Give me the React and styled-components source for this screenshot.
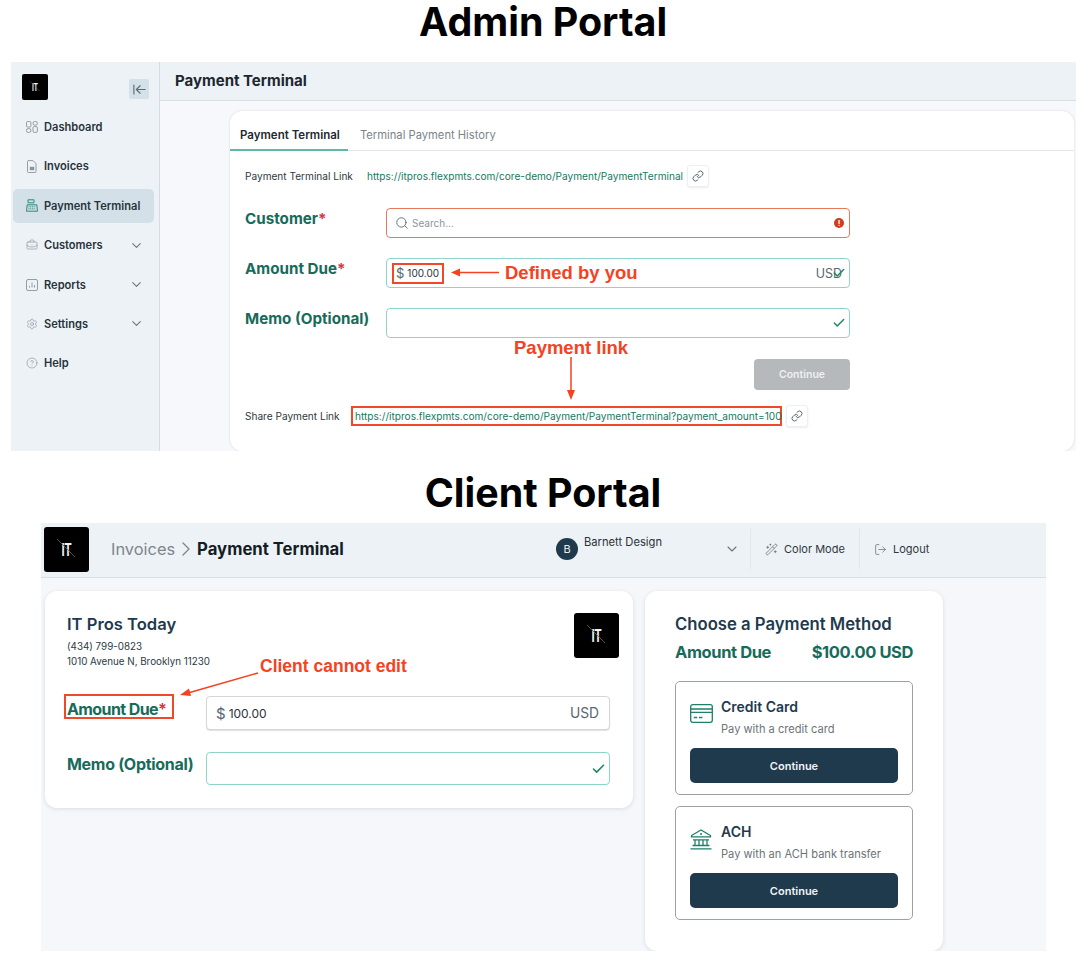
import * as React from 'react';
import styled, { createGlobalStyle } from 'styled-components';
import {
  ArrowLeftToLine,
  BriefcaseBusiness,
  Check,
  ChevronDown,
  ChevronRight,
  CircleHelp,
  Link as LinkIcon,
  LogOut,
  Search,
  Settings,
  WandSparkles,
} from 'lucide-react';

const GlobalStyle = createGlobalStyle`
  html, body {
    margin: 0;
    background: #fff;
    font-family: Inter, "Liberation Sans", sans-serif;
  }
  * { box-sizing: border-box; }
`;

const Page = styled.div`
  position: relative;
  width: 1086px;
  height: 964px;
  overflow: hidden;
`;

const PortalTitle = styled.h1`
  margin: 0;
  height: ${(p) => p.$height}px;
  padding-top: ${(p) => p.$top}px;
  text-align: center;
  font: 700 39.4px/44px Inter, sans-serif;
  color: #000;
`;

/* admin */
const AdminFrame = styled.section`
  display: flex;
  width: 1065px;
  height: 389px;
  margin-left: 11px;
  overflow: hidden;
`;

const Sidebar = styled.aside`
  width: 149px;
  flex: none;
  padding: 12px 5px 0 2px;
  background: #edf2f6;
  border-right: 1px solid #d4dce2;
`;

const SidebarTop = styled.div`
  display: flex;
  align-items: center;
  justify-content: space-between;
  padding: 0 5px 0 9px;
  height: 26px;
  margin-bottom: 10px;
`;

const LogoBox = styled.div`
  position: relative;
  display: flex;
  align-items: center;
  justify-content: center;
  flex: none;
  width: ${(p) => p.$size}px;
  height: ${(p) => p.$size}px;
  background: #000;
  border-radius: ${(p) => (p.$size > 30 ? 3 : 2)}px;
  color: #f2f2f2;
  font: 700 ${(p) => Math.round(p.$size * 0.43)}px/1 "Liberation Sans", sans-serif;
  span {
    transform: scaleX(0.6);
  }
  svg {
    position: absolute;
    inset: 0;
  }
`;

const CollapseButton = styled.button`
  display: flex;
  align-items: center;
  justify-content: center;
  width: 20px;
  height: 20px;
  padding: 0;
  margin-top: 4px;
  border: 0;
  border-radius: 2px;
  background: #d5e1e8;
  color: #5f6b75;
`;

const NavList = styled.nav`
  display: flex;
  flex-direction: column;
  gap: 5.4px;
`;

const NavItem = styled.div`
  display: flex;
  align-items: center;
  gap: 6px;
  height: 34px;
  padding: 0 10px 0 13px;
  border-radius: 5px;
  background: ${(p) => (p.$active ? '#d3e0e7' : 'transparent')};
  color: ${(p) => (p.$active ? '#2a8a78' : '#8b949b')};
  font-size: 11.1px;
  span {
    flex: 1;
    color: #27323b;
    font-weight: 600;
    white-space: nowrap;
  }
`;

const NavChevron = styled(ChevronDown)`
  color: #6d757c;
`;

const AdminMain = styled.div`
  flex: 1;
  display: flex;
  flex-direction: column;
  background: #f6f8fb;
`;

const AdminHeader = styled.header`
  height: 39px;
  flex: none;
  padding-left: 15px;
  background: #edf2f6;
  border-bottom: 1px solid #d9e0e5;
  color: #1c2730;
  font-size: 15px;
  font-weight: 700;
  line-height: 37px;
`;

const TerminalCard = styled.div`
  width: 844px;
  height: 345px;
  margin: 10px 0 0 70px;
  background: #fff;
  border-radius: 12px;
  box-shadow: 0 0 2px rgba(60, 80, 100, 0.22);
`;

const Tabs = styled.div`
  display: flex;
  height: 40px;
  border-bottom: 1px solid #e4e8eb;
`;

const Tab = styled.div`
  width: ${(p) => p.$width}px;
  height: 40px;
  padding-left: ${(p) => p.$pad}px;
  border-bottom: 2px solid ${(p) => (p.$active ? '#5fb8a5' : 'transparent')};
  color: ${(p) => (p.$active ? '#1d2830' : '#7c8489')};
  font-size: ${(p) => (p.$active ? 11.5 : 11.2)}px;
  font-weight: ${(p) => (p.$active ? 600 : 400)};
  line-height: 48px;
  white-space: nowrap;
`;

const TerminalBody = styled.div`
  padding: 14px 0 0 15px;
`;

const LinkRow = styled.div`
  display: flex;
  align-items: center;
  height: 22px;
  margin-bottom: ${(p) => p.$after || 0}px;
`;

const SmallLabel = styled.div`
  width: ${(p) => p.$width}px;
  color: #30383e;
  font-size: 10.1px;
  white-space: nowrap;
`;

const LinkText = styled.a`
  color: #147a63;
  font-size: 10.1px;
  white-space: nowrap;
`;

const RedBox = styled.div`
  display: flex;
  align-items: center;
  border: 2px solid #f0492a;
`;

const ShareBox = styled(RedBox)`
  width: 431px;
  height: 20px;
  padding-left: 2px;
  margin-left: -1px;
`;

const CopyButton = styled.button`
  display: flex;
  align-items: center;
  justify-content: center;
  flex: none;
  width: 22px;
  height: 22px;
  padding: 0;
  margin-left: 4px;
  border: 1px solid #edf0f2;
  border-radius: 3px;
  background: #fff;
  box-shadow: 0 1px 2px rgba(0, 0, 0, 0.08);
  color: #2f4656;
`;

const FormRow = styled.div`
  display: grid;
  grid-template-columns: ${(p) => p.$label}px ${(p) => p.$field}px;
  align-items: start;
  margin-bottom: ${(p) => p.$after}px;
`;

const FieldLabel = styled.div`
  padding-top: ${(p) => p.$top || 0}px;
  color: #176b5a;
  font-size: ${(p) => p.$size}px;
  font-weight: 700;
  line-height: 21px;
  letter-spacing: ${(p) => p.$track || 0}px;
  white-space: nowrap;
  em {
    color: #d9344a;
    font-style: normal;
  }
`;

const borders = { error: '#e8795c', ok: '#8fd4c8', plain: '#d3d7da' };

const Field = styled.div`
  position: relative;
  display: flex;
  align-items: center;
  justify-content: space-between;
  height: ${(p) => p.$height}px;
  padding: ${(p) => p.$pad || '0 5px'};
  border: 1px solid ${(p) => borders[p.$tone]};
  border-radius: 4px;
  background: #fff;
  box-shadow: ${(p) => (p.$tone === 'plain' ? '0 1px 1px rgba(0,0,0,.12)' : 'none')};
`;

const FieldOverlayIcon = styled.div`
  position: absolute;
  top: 50%;
  right: 3px;
  display: flex;
  transform: translateY(-50%);
  color: #1f8a5c;
`;

const SearchLead = styled.div`
  display: flex;
  align-items: center;
  gap: 3px;
  padding-left: 3px;
  color: #8c959b;
  font-size: 10px;
  svg {
    color: #56646e;
  }
`;

const AlertDot = styled.div`
  width: 10px;
  height: 10px;
  border-radius: 50%;
  background: #d23b1f;
  color: #fff;
  font-size: 8px;
  font-weight: 700;
  line-height: 10px;
  text-align: center;
`;

const Money = styled.div`
  display: flex;
  align-items: center;
  gap: ${(p) => p.$gap}px;
  color: #2a3238;
  font-size: ${(p) => p.$size}px;
  b {
    color: #56646e;
    font-size: ${(p) => p.$size + 3}px;
    font-weight: 400;
  }
`;

const AmountBox = styled(RedBox)`
  width: 52px;
  height: 21px;
  padding-left: 2px;
`;

const Currency = styled.div`
  color: #5a6770;
  font-size: ${(p) => p.$size}px;
`;

const ContinueRow = styled.div`
  display: flex;
  justify-content: flex-end;
  width: 605px;
  margin-bottom: 15px;
`;

const DisabledButton = styled.button`
  width: 96px;
  height: 31px;
  border: 0;
  border-radius: 4px;
  background: #b5b9bc;
  color: #eef0f1;
  font: 600 10.5px Inter, sans-serif;
`;

/* client */
const ClientFrame = styled.section`
  width: 1005px;
  height: 428px;
  margin-left: 41px;
  background: #f5f7fb;
  overflow: hidden;
`;

const ClientHeader = styled.header`
  display: flex;
  align-items: center;
  height: 55px;
  padding: 0 0 2px 3px;
  background: #edf2f6;
  border-bottom: 1px solid #d9e0e5;
`;

const Breadcrumb = styled.div`
  display: flex;
  align-items: center;
  width: 445px;
  margin-left: 22px;
  color: #7d858b;
  font-size: 16.4px;
  white-space: nowrap;
  svg {
    margin: 0 -1px;
  }
  strong {
    color: #151d24;
    font-size: 16.7px;
    font-weight: 700;
  }
`;

const UserPicker = styled.div`
  display: flex;
  align-items: center;
  width: 195px;
  height: 40px;
  padding-right: 10px;
  border-right: 1px solid #e1e6ea;
  color: #6d757c;
`;

const Avatar = styled.div`
  width: 22px;
  height: 22px;
  flex: none;
  border-radius: 50%;
  background: #1f3a4d;
  color: #e7edf1;
  font-size: 11px;
  line-height: 22px;
  text-align: center;
`;

const UserName = styled.div`
  flex: 1;
  align-self: flex-start;
  margin: 5px 0 0 6px;
  color: #2a3238;
  font-size: 11.2px;
  line-height: 16px;
`;

const HeaderAction = styled.div`
  display: flex;
  align-items: center;
  gap: 6px;
  width: ${(p) => p.$width}px;
  height: 40px;
  padding-left: 14px;
  border-right: ${(p) => (p.$divider ? '1px solid #e1e6ea' : '0')};
  color: #2f383f;
  font-size: 11px;
  svg {
    color: #5b6770;
  }
`;

const ClientBody = styled.div`
  display: flex;
  align-items: flex-start;
  gap: 12px;
  padding: 13px 0 0 4px;
`;

const Panel = styled.div`
  background: #fff;
  border-radius: 12px;
  box-shadow: 0 1px 4px rgba(40, 60, 80, 0.14);
`;

const InfoPanel = styled(Panel)`
  width: 588px;
  height: 217px;
  padding: 22px 14px 0 22px;
`;

const InfoTop = styled.div`
  display: flex;
  justify-content: space-between;
  height: 83px;
`;

const BusinessName = styled.div`
  margin-bottom: 4px;
  color: #1f3a4d;
  font-size: 16.6px;
  font-weight: 600;
  line-height: 22px;
`;

const BusinessLine = styled.div`
  color: #2c3a45;
  font-size: 9.8px;
  line-height: 15px;
`;

const AmountLabelBox = styled(RedBox)`
  align-items: flex-start;
  width: 110px;
  height: 25px;
  margin: -2px 0 0 -3px;
  padding: 3px 0 0 1px;
`;

const MethodPanel = styled(Panel)`
  width: 298px;
  height: 360px;
  padding: 22px 30px 0;
`;

const MethodTitle = styled.div`
  color: #1f3a4d;
  font-size: 16.7px;
  font-weight: 600;
  line-height: 22px;
`;

const DueRow = styled.div`
  display: flex;
  justify-content: space-between;
  margin: 6px 0 18px;
  color: #176b5a;
  font-size: 16.5px;
  font-weight: 700;
  line-height: 22px;
  letter-spacing: -0.4px;
`;

const MethodBox = styled.div`
  width: 238px;
  height: 114px;
  margin-bottom: 11px;
  padding: 14px 14px 0;
  border: 1px solid #9aa2a8;
  border-radius: 5px;
`;

const MethodHead = styled.div`
  display: flex;
  gap: 8px;
  height: 52px;
  svg {
    flex: none;
    margin-top: 8px;
    color: #1f7f6a;
  }
`;

const MethodName = styled.div`
  margin-top: 1px;
  color: #1f3a4d;
  font-size: 14px;
  font-weight: 600;
  line-height: 20px;
`;

const MethodHint = styled.div`
  margin-top: 4px;
  color: #6c7378;
  font-size: 11.1px;
  line-height: 16px;
  white-space: nowrap;
`;

const DarkButton = styled.button`
  width: 100%;
  height: 35px;
  border: 0;
  border-radius: 5px;
  background: #1f3a4d;
  color: #f1f4f6;
  font: 600 11px Inter, sans-serif;
`;

/* red notes lying over the screens */
const Note = styled.div`
  position: absolute;
  left: ${(p) => p.$x}px;
  top: ${(p) => p.$y}px;
  color: #f5421f;
  font: 700 ${(p) => p.$size}px/22px "Liberation Sans", sans-serif;
  white-space: nowrap;
`;

const ArrowLayer = styled.svg`
  position: absolute;
  inset: 0;
  pointer-events: none;
`;

const Logo = ({ size }) => (
  <LogoBox $size={size}>
    <span>IT</span>
    <svg viewBox="0 0 45 45">
      <line x1="13" y1="12" x2="31" y2="30" stroke="#666" strokeWidth="0.8" />
    </svg>
  </LogoBox>
);

const DashboardIcon = () => (
  <svg width="12" height="12" viewBox="0 0 12 12" fill="none" stroke="currentColor" strokeWidth="0.9">
    <rect x="0.5" y="0.5" width="4.4" height="5.6" rx="1.2" />
    <rect x="7" y="0.5" width="4.4" height="3.6" rx="1.6" />
    <rect x="0.5" y="7.6" width="4.4" height="3.8" rx="1.6" />
    <rect x="7" y="5.6" width="4.4" height="5.8" rx="1.2" />
  </svg>
);

const InvoiceIcon = () => (
  <svg width="12" height="13" viewBox="0 0 12 13" fill="none" stroke="currentColor" strokeWidth="0.9">
    <path d="M2 .6h5l3 3v8a.9.9 0 0 1-.9.9H2.400a.9.9 0 0 1-.9-.9V1.500z" />
    <rect x="3.800" y="6.800" width="4.400" height="3.400" fill="currentColor" stroke="none" />
  </svg>
);

const TerminalIcon = () => (
  <svg width="12" height="13" viewBox="0 0 12 13" fill="none" stroke="currentColor" strokeWidth="1">
    <path d="M2 .8h6v3H2zM1.200 5.800h9.600l.7 6.400H.5z" />
    <path d="M2.500 7.800h7M2.500 9.800h7" strokeDasharray="1 .7" />
  </svg>
);

const ReportsIcon = () => (
  <svg width="12" height="12" viewBox="0 0 12 12" fill="none" stroke="currentColor" strokeWidth="0.9">
    <rect x="0.5" y="0.5" width="11" height="11" rx="1.500" />
    <path d="M3.500 8.500V7M6 8.500v-5M8.500 8.500V6" />
  </svg>
);

const CardIcon = () => (
  <svg width="23" height="19" viewBox="0 0 23 19" fill="none" stroke="currentColor" strokeWidth="1.300">
    <rect x="0.700" y="0.700" width="21.600" height="17.600" rx="2" />
    <path d="M.7 5h21.600M.7 8.300h21.600M3.800 13.500h3.400M9 13.500h3.400" />
  </svg>
);

const BankIcon = () => (
  <svg width="23" height="21" viewBox="0 0 23 21" fill="none" stroke="currentColor" strokeWidth="1.300">
    <path d="M11 1 1.500 6.500v1.300h19V6.500zM3 10.800h16M5 11v5M9 11v5M13 11v5M17 11v5M2.500 16.500h17M.5 19.800h21" />
    <circle cx="11" cy="5" r="1" fill="currentColor" stroke="none" />
  </svg>
);

const navItems = [
  { label: 'Dashboard', icon: <DashboardIcon /> },
  { label: 'Invoices', icon: <InvoiceIcon /> },
  { label: 'Payment Terminal', icon: <TerminalIcon />, active: true },
  { label: 'Customers', icon: <BriefcaseBusiness size={12} strokeWidth={1.3} />, more: true },
  { label: 'Reports', icon: <ReportsIcon />, more: true },
  { label: 'Settings', icon: <Settings size={12} strokeWidth={1.3} />, more: true },
  { label: 'Help', icon: <CircleHelp size={12} strokeWidth={1.3} /> },
];

const AdminPortal = () => (
  <AdminFrame>
    <Sidebar>
      <SidebarTop>
        <Logo size={26} />
        <CollapseButton>
          <ArrowLeftToLine size={15} strokeWidth={1.8} />
        </CollapseButton>
      </SidebarTop>
      <NavList>
        {navItems.map((item) => (
          <NavItem key={item.label} $active={item.active}>
            {item.icon}
            <span>{item.label}</span>
            {item.more && <NavChevron size={15} strokeWidth={1.7} />}
          </NavItem>
        ))}
      </NavList>
    </Sidebar>
    <AdminMain>
      <AdminHeader>Payment Terminal</AdminHeader>
      <TerminalCard>
        <Tabs>
          <Tab $active $width={118} $pad={10}>Payment Terminal</Tab>
          <Tab $width={200} $pad={12}>Terminal Payment History</Tab>
        </Tabs>
        <TerminalBody>
          <LinkRow $after={21}>
            <SmallLabel $width={122}>Payment Terminal Link</SmallLabel>
            <LinkText>https://itpros.flexpmts.com/core-demo/Payment/PaymentTerminal</LinkText>
            <CopyButton>
              <LinkIcon size={12} strokeWidth={1.6} />
            </CopyButton>
          </LinkRow>
          <FormRow $label={141} $field={464} $after={20}>
            <FieldLabel $size={15.200}>Customer<em>*</em></FieldLabel>
            <Field $tone="error" $height={30}>
              <SearchLead>
                <Search size={14} strokeWidth={1.5} />
                Search...
              </SearchLead>
              <AlertDot>!</AlertDot>
            </Field>
          </FormRow>
          <FormRow $label={141} $field={464} $after={20}>
            <FieldLabel $size={15.200}>Amount Due<em>*</em></FieldLabel>
            <Field $tone="ok" $height={30} $pad="0 7px 0 5px">
              <AmountBox>
                <Money $size={10} $gap={3}><b>$</b>100.00</Money>
              </AmountBox>
              <Currency $size={12.500}>USD</Currency>
              <FieldOverlayIcon>
                <Check size={14} strokeWidth={2.6} />
              </FieldOverlayIcon>
            </Field>
          </FormRow>
          <FormRow $label={141} $field={464} $after={21}>
            <FieldLabel $size={15.200}>Memo (Optional)</FieldLabel>
            <Field $tone="ok" $height={30}>
              <FieldOverlayIcon>
                <Check size={14} strokeWidth={2.6} />
              </FieldOverlayIcon>
            </Field>
          </FormRow>
          <ContinueRow>
            <DisabledButton>Continue</DisabledButton>
          </ContinueRow>
          <LinkRow>
            <SmallLabel $width={107}>Share Payment Link</SmallLabel>
            <ShareBox>
              <LinkText>https://itpros.flexpmts.com/core-demo/Payment/PaymentTerminal?payment_amount=100</LinkText>
            </ShareBox>
            <CopyButton>
              <LinkIcon size={12} strokeWidth={1.6} />
            </CopyButton>
          </LinkRow>
        </TerminalBody>
      </TerminalCard>
    </AdminMain>
  </AdminFrame>
);

const ClientPortal = () => (
  <ClientFrame>
    <ClientHeader>
      <Logo size={45} />
      <Breadcrumb>
        Invoices
        <ChevronRight size={24} strokeWidth={1.3} />
        <strong>Payment Terminal</strong>
      </Breadcrumb>
      <UserPicker>
        <Avatar>B</Avatar>
        <UserName>Barnett Design</UserName>
        <ChevronDown size={16} strokeWidth={1.6} />
      </UserPicker>
      <HeaderAction $width={109} $divider>
        <WandSparkles size={13} strokeWidth={1.3} />
        Color Mode
      </HeaderAction>
      <HeaderAction $width={90}>
        <LogOut size={13} strokeWidth={1.3} />
        Logout
      </HeaderAction>
    </ClientHeader>
    <ClientBody>
      <InfoPanel>
        <InfoTop>
          <div>
            <BusinessName>IT Pros Today</BusinessName>
            <BusinessLine>(434) 799-0823</BusinessLine>
            <BusinessLine>1010 Avenue N, Brooklyn 11230</BusinessLine>
          </div>
          <Logo size={45} />
        </InfoTop>
        <FormRow $label={139} $field={404} $after={22}>
          <AmountLabelBox>
            <FieldLabel $size={16} $track={-0.6}>Amount Due<em>*</em></FieldLabel>
          </AmountLabelBox>
          <Field $tone="plain" $height={34} $pad="0 10px 0 9px">
            <Money $size={12} $gap={3}><b>$</b>100.00</Money>
            <Currency $size={13.800}>USD</Currency>
          </Field>
        </FormRow>
        <FormRow $label={139} $field={404} $after={0}>
          <FieldLabel $size={16} $track={-0.3} $top={2}>Memo (Optional)</FieldLabel>
          <Field $tone="ok" $height={33}>
            <FieldOverlayIcon>
              <Check size={15} strokeWidth={2.6} />
            </FieldOverlayIcon>
          </Field>
        </FormRow>
      </InfoPanel>
      <MethodPanel>
        <MethodTitle>Choose a Payment Method</MethodTitle>
        <DueRow>
          <div>Amount Due</div>
          <div>$100.00 USD</div>
        </DueRow>
        <MethodBox>
          <MethodHead>
            <CardIcon />
            <div>
              <MethodName>Credit Card</MethodName>
              <MethodHint>Pay with a credit card</MethodHint>
            </div>
          </MethodHead>
          <DarkButton>Continue</DarkButton>
        </MethodBox>
        <MethodBox>
          <MethodHead>
            <BankIcon />
            <div>
              <MethodName>ACH</MethodName>
              <MethodHint>Pay with an ACH bank transfer</MethodHint>
            </div>
          </MethodHead>
          <DarkButton>Continue</DarkButton>
        </MethodBox>
      </MethodPanel>
    </ClientBody>
  </ClientFrame>
);

const App = () => (
  <>
    <GlobalStyle />
    <Page>
      <PortalTitle $height={62} $top={0}>Admin Portal</PortalTitle>
      <AdminPortal />
      <PortalTitle $height={72} $top={20}>Client Portal</PortalTitle>
      <ClientPortal />
      <Note $x={505} $y={262} $size={18.500}>Defined by you</Note>
      <Note $x={514} $y={337} $size={18.500}>Payment link</Note>
      <Note $x={260} $y={655} $size={17.500}>Client cannot edit</Note>
      <ArrowLayer width="1086" height="964" viewBox="0 0 1086 964">
        <g stroke="#f5421f" strokeWidth="1.500" fill="#f5421f">
          <line x1="499" y1="272.500" x2="458" y2="272.500" />
          <polygon points="451,272.500 460,268.500 460,276.500" stroke="none" />
          <line x1="571" y1="357" x2="571" y2="392" />
          <polygon points="571,400 567,390 575,390" stroke="none" />
          <line x1="258" y1="673" x2="188" y2="693" />
          <polygon points="180,695 189,688.500 191,696" stroke="none" />
        </g>
      </ArrowLayer>
    </Page>
  </>
);

export default App;
